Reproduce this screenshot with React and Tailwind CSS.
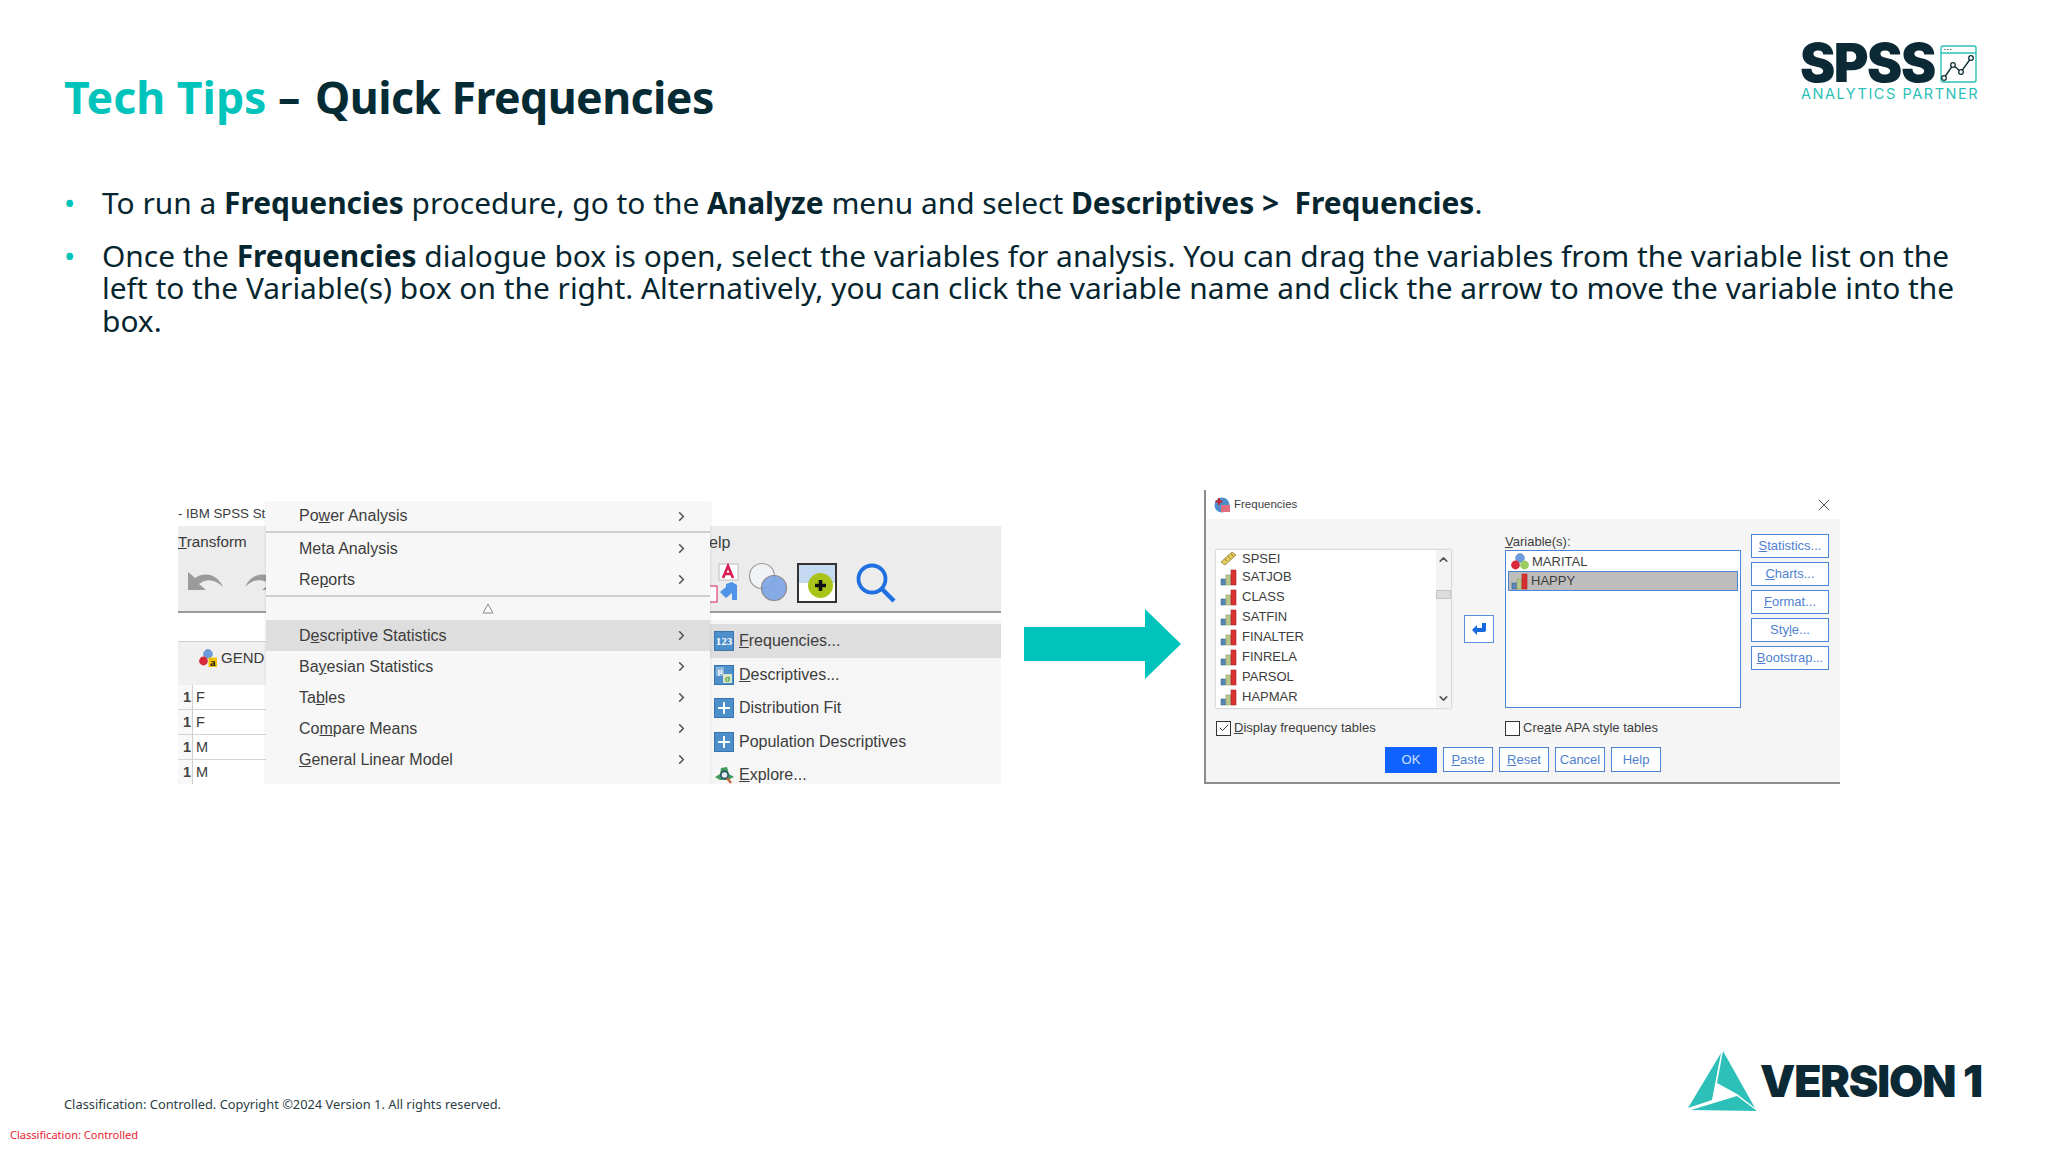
import React from 'react';
import { ChevronRight, ChevronUp, ChevronDown, X, Check } from 'lucide-react';

const MENU_TOP = [
  { label: <>Po<u>w</u>er Analysis</>, line: true, h: 'h-[30px]' },
  { label: 'Meta Analysis', h: 'h-[31px]' },
  { label: <>Re<u>p</u>orts</>, line: true, h: 'h-[31px]' }
];

const MENU_BOTTOM = [
  { label: <>D<u>e</u>scriptive Statistics</>, active: true },
  { label: <>Ba<u>y</u>esian Statistics</> },
  { label: <>Ta<u>b</u>les</> },
  { label: <>Co<u>m</u>pare Means</> },
  { label: <><u>G</u>eneral Linear Model</> },
  { label: 'Generalized Linear Models' }
];

const ROWS = [['1', 'F'], ['1', 'F'], ['1', 'M'], ['1', 'M']];
const VARIABLES = ['SATJOB', 'CLASS', 'SATFIN', 'FINALTER', 'FINRELA', 'PARSOL', 'HAPMAR'];

const SIDE_BUTTONS = [
  <><u>S</u>tatistics...</>,
  <><u>C</u>harts...</>,
  <><u>F</u>ormat...</>,
  <>Sty<u>l</u>e...</>,
  <><u>B</u>ootstrap...</>
];

const BOTTOM_BUTTONS = [
  { label: <><u>P</u>aste</>, w: 'w-[50px]' },
  { label: <><u>R</u>eset</>, w: 'w-[50px]' },
  { label: 'Cancel', w: 'w-[50px]' },
  { label: 'Help', w: 'w-[50px]' }
];

function ScaleIcon() {
  return (
    <svg width="17" height="17" viewBox="0 0 17 17" className="shrink-0">
      <rect x="1" y="10" width="4.5" height="6" fill="#5b86b8" stroke="#3f658f" strokeWidth="0.6" />
      <rect x="6" y="6" width="4.5" height="10" fill="#b9c98a" stroke="#8d9c60" strokeWidth="0.6" />
      <rect x="11" y="1" width="5" height="15" fill="#d8312f" stroke="#a82424" strokeWidth="0.6" />
    </svg>
  );
}

function RulerIcon() {
  return (
    <svg width="17" height="17" viewBox="0 0 17 17" className="shrink-0">
      <path d="M1 12 L12 2 L16 5 L5 15 Z" fill="#e3cb5e" stroke="#8d7a2c" strokeWidth="0.8" />
      <path d="M5 9l2 2M8 6.5l2 2M11 4l2 2" stroke="#6f6020" strokeWidth="0.8" />
    </svg>
  );
}

function NominalIcon({ letter }) {
  return (
    <svg width="20" height="20" viewBox="0 0 20 20" className="shrink-0">
      <circle cx="10" cy="6" r="4.4" fill="#6d9be0" stroke="#4b78bd" strokeWidth="0.6" />
      <circle cx="5.5" cy="13" r="4.4" fill="#d9283a" />
      {letter ? (
        <>
          <rect x="10.5" y="9.5" width="8.5" height="9.5" fill="#f2c200" />
          <text x="14.7" y="18" textAnchor="middle" fontSize="11" fontWeight="700" fontFamily="Liberation Serif, serif" fill="#1a1a1a">a</text>
        </>
      ) : (
        <circle cx="14.5" cy="13" r="4.4" fill="#9ccb62" />
      )}
    </svg>
  );
}

function MenuIcon({ kind }) {
  if (kind === 'explore') {
    return (
      <svg width="21" height="21" viewBox="0 0 21 21" className="shrink-0">
        <path d="M1 12 L6 9 L7 3 L13 2 L15 9 L20 12 L14 15 L6 15 Z" fill="#3f9a5c" />
        <circle cx="10.5" cy="10" r="3.6" fill="#e8eef2" stroke="#2c5068" strokeWidth="1.6" />
        <path d="M13 13 L17 18" stroke="#c2643c" strokeWidth="2.4" />
      </svg>
    );
  }
  return (
    <div className="w-[20px] h-[20px] shrink-0 bg-[#4d8fcb] border border-[#3a76ad] flex items-center justify-center text-white font-['Liberation_Serif',serif] text-[11px] font-bold leading-none">
      {kind === 'freq' && '123'}
      {kind === 'desc' && (
        <svg width="18" height="18" viewBox="0 0 18 18">
          <rect x="1" y="1" width="8" height="9" fill="#8db8dc" />
          <rect x="8" y="8" width="9" height="9" fill="#d7e6c6" />
          <text x="5" y="8" textAnchor="middle" fontSize="8" fill="#fff">µ</text>
          <text x="12.5" y="15.5" textAnchor="middle" fontSize="10" fill="#52a447">σ</text>
        </svg>
      )}
      {kind === 'plus' && (
        <svg width="14" height="14" viewBox="0 0 14 14">
          <path d="M7 1v12M1 7h12" stroke="#fff" strokeWidth="2" />
        </svg>
      )}
    </div>
  );
}

function SpssLogo() {
  return (
    <div className="flex flex-col w-[178px] mt-[44px] mr-[69px]">
      <div className="flex items-center h-[39px]">
        <span className="font-['Inter',sans-serif] font-black text-[53px] leading-none text-[#0b2a35] tracking-[-1.5px] w-[140px] -ml-[1px]">SPSS</span>
        <svg width="37" height="38" viewBox="0 0 37 38" className="shrink-0">
          <rect x="1" y="1" width="35" height="36" rx="2" fill="none" stroke="#2cc0b8" strokeWidth="1.4" />
          <path d="M1 8h35" stroke="#2cc0b8" strokeWidth="1.4" />
          <path d="M4 4.500h1.500M7 4.500h1.500M10 4.500h1.500" stroke="#5c6a70" strokeWidth="1.200" />
          <path d="M4 33 L13 20 L21 27 L31 13" fill="none" stroke="#13303a" strokeWidth="1.400" />
          <circle cx="4" cy="33" r="2.300" fill="#fff" stroke="#13303a" strokeWidth="1.300" />
          <circle cx="13" cy="20" r="2.300" fill="#fff" stroke="#13303a" strokeWidth="1.300" />
          <circle cx="21" cy="27" r="2.300" fill="#fff" stroke="#13303a" strokeWidth="1.300" />
          <circle cx="31" cy="13" r="2.300" fill="#fff" stroke="#13303a" strokeWidth="1.300" />
        </svg>
      </div>
      <span className="font-['Inter',sans-serif] text-[14.5px] leading-[16px] mt-[3px] text-[#2cc0b8] tracking-[1.55px] whitespace-nowrap">ANALYTICS PARTNER</span>
    </div>
  );
}

function VersionLogo() {
  return (
    <div className="flex items-center mr-[66px] mb-[41px]">
      <svg width="70" height="60" viewBox="0 0 70 60" className="shrink-0">
        <path d="M33 2 L0 57 L24 49 Z" fill="#2cc0b8" />
        <path d="M35 0 L67 57 L49 43 L29 32 Z" fill="#2cc0b8" />
        <path d="M3 59 L49 45 L69 60 Z" fill="#2cc0b8" />
      </svg>
      <span className="font-['Inter',sans-serif] font-black text-[44.5px] leading-none text-[#0b2a35] tracking-[-1.2px] ml-[2px] whitespace-nowrap">VERSION 1</span>
    </div>
  );
}

function LeftColumn() {
  return (
    <div className="w-[88px] shrink-0 flex flex-col font-['Liberation_Sans',sans-serif] text-[#3a3a3a] overflow-hidden">
      <div className="h-[25px] shrink-0 flex items-center text-[13.300px] whitespace-nowrap">- IBM SPSS St</div>
      <div className="h-[87px] shrink-0 bg-[#ececec] border-b-2 border-[#9a9a9a] flex flex-col">
        <span className="text-[15.200px] leading-[30px] mt-[1px] whitespace-nowrap"><u>T</u>ransform</span>
        <div className="flex gap-[16px] pl-[8px] mt-[11px]">
          <svg width="40" height="26" viewBox="0 0 40 26" className="shrink-0">
            <path d="M2 4 L2 22 L20 22 L13 16 C20 10 29 11 37 19 C32 7 19 3 9 10 Z" fill="#9b9b9b" />
          </svg>
          <svg width="40" height="26" viewBox="0 0 40 26" className="shrink-0">
            <path d="M38 4 L38 22 L20 22 L27 16 C20 10 11 11 3 19 C8 7 21 3 31 10 Z" fill="#9b9b9b" />
          </svg>
        </div>
      </div>
      <div className="h-[28px] shrink-0" />
      <div className="h-[44px] shrink-0 bg-[#f0f0f0] border-t border-[#cfcfcf] flex items-center pl-[20px] pb-[11px] gap-[3px] text-[15px]">
        <NominalIcon letter />
        <span>GEND</span>
      </div>
      {ROWS.map(([num, value], i) => (
        <div key={i} className="h-[25px] flex items-center border-b border-[#d4d4d4] text-[14.500px] shrink-0">
          <span className="w-[14px] text-right pr-[1px] font-bold text-[#444] bg-[#f8f8f8] h-full leading-[25px]">{num}</span>
          <span className="border-l border-[#cfcfcf] pl-[3px] h-full leading-[25px]">{value}</span>
        </div>
      ))}
    </div>
  );
}

function MainMenu() {
  return (
    <div className="w-[444px] shrink-0 bg-[#f7f7f7] font-['Liberation_Sans',sans-serif] text-[16px] text-[#3d3d3d] flex flex-col shadow-[0_0_3px_rgba(0,0,0,0.12)] z-10">
      {MENU_TOP.map((item, i) => (
        <React.Fragment key={i}>
          <div className={`${item.h} shrink-0 flex items-center justify-between pl-[33px] pr-[21px]`}>
            <span>{item.label}</span>
            <ChevronRight size={15} strokeWidth={2.600} className="text-[#555]" />
          </div>
          {item.line && <div className="h-[2px] bg-[#cfcfcf] shrink-0" />}
        </React.Fragment>
      ))}
      <div className="h-[23px] flex items-center justify-center shrink-0">
        <svg width="12" height="11" viewBox="0 0 12 11">
          <path d="M6 1 L11 10 H1 Z" fill="none" stroke="#8a8a8a" strokeWidth="1" />
        </svg>
      </div>
      {MENU_BOTTOM.map((item, i) => (
        <div
          key={i}
          className={
            item.active
              ? 'h-[31px] shrink-0 flex items-center justify-between pl-[33px] pr-[21px] bg-[#dedede]'
              : 'h-[31px] shrink-0 flex items-center justify-between pl-[33px] pr-[21px]'
          }
        >
          <span>{item.label}</span>
          <ChevronRight size={15} strokeWidth={2.600} className="text-[#555]" />
        </div>
      ))}
    </div>
  );
}

function RightColumn() {
  return (
    <div className="flex-1 flex flex-col font-['Liberation_Sans',sans-serif] text-[#3d3d3d] overflow-hidden">
      <div className="h-[25px] shrink-0" />
      <div className="h-[87px] bg-[#ececec] border-b-2 border-[#9a9a9a] flex flex-col shrink-0">
        <span className="text-[16px] leading-[30px] mt-[2px] -ml-[1px]">elp</span>
        <div className="flex items-center mt-[3px]">
          <svg width="30" height="42" viewBox="0 0 30 42" className="shrink-0">
            <rect x="9" y="2" width="19" height="16" fill="#fff" stroke="#bbb" />
            <path d="M13 16 L18 4 L23 16 M15 12h6" fill="none" stroke="#d81b52" strokeWidth="2.600" />
            <rect x="-2" y="24" width="9" height="16" fill="#fff" stroke="#d81b52" />
            <path d="M10 30 L16 25 V22 L22 20 L27 23 V38 H22 V31 L16 36 Z" fill="#4f94e8" />
          </svg>
          <svg width="44" height="44" viewBox="0 0 44 44" className="ml-[6px] shrink-0">
            <circle cx="16" cy="15" r="12.500" fill="#f0f2f6" stroke="#9a9a9a" strokeWidth="1.200" />
            <circle cx="28" cy="27" r="12.500" fill="#7ba3e4" fillOpacity="0.900" stroke="#8a8a8a" strokeWidth="1.200" />
          </svg>
          <div className="w-[40px] h-[40px] ml-[7px] border-2 border-[#333] bg-gradient-to-b from-[#c5d9f2] from-50% to-white to-50% flex items-end justify-end pr-[2px] pb-[3px] shrink-0">
            <div className="w-[25px] h-[25px] rounded-full bg-[#aac41a] flex items-center justify-center">
              <svg width="13" height="13" viewBox="0 0 13 13">
                <path d="M6.500 1v11M1 6.500h11" stroke="#111" strokeWidth="3.600" />
              </svg>
            </div>
          </div>
          <svg width="42" height="42" viewBox="0 0 42 42" className="ml-[18px] shrink-0">
            <circle cx="17" cy="17" r="13.500" fill="none" stroke="#1f6fe0" strokeWidth="3.800" />
            <path d="M27 27 L39 39" stroke="#1f6fe0" strokeWidth="4.400" />
          </svg>
        </div>
      </div>
      <div className="h-[7px] shrink-0" />
      <div className="flex-1 bg-[#f6f6f6] pt-[4px] text-[16px] flex flex-col">
        <div className="h-[34px] bg-[#dedede] flex items-center pl-[4px] gap-[5px] shrink-0">
          <MenuIcon kind="freq" />
          <span><u>F</u>requencies...</span>
        </div>
        <div className="h-[33px] flex items-center pl-[4px] gap-[5px] shrink-0">
          <MenuIcon kind="desc" />
          <span><u>D</u>escriptives...</span>
        </div>
        <div className="h-[34px] flex items-center pl-[4px] gap-[5px] shrink-0">
          <MenuIcon kind="plus" />
          <span>Distribution Fit</span>
        </div>
        <div className="h-[33px] flex items-center pl-[4px] gap-[5px] shrink-0">
          <MenuIcon kind="plus" />
          <span>Population Descriptives</span>
        </div>
        <div className="h-[34px] flex items-center pl-[4px] gap-[4px] shrink-0">
          <MenuIcon kind="explore" />
          <span><u>E</u>xplore...</span>
        </div>
      </div>
    </div>
  );
}

function FrequenciesDialog() {
  return (
    <div className="w-[636px] h-[294px] shrink-0 border-l-2 border-b-2 border-[#8c8c8c] flex flex-col font-['Liberation_Sans',sans-serif] text-[13px] text-[#3d3d3d]">
      <div className="h-[29px] shrink-0 flex items-center pl-[8px] pr-[6px] gap-[2px] bg-white">
        <svg width="16" height="16" viewBox="0 0 16 16" className="shrink-0">
          <circle cx="8" cy="8" r="7.500" fill="#4d8fcb" />
          <rect x="7" y="8" width="9" height="7" fill="#e0707e" />
          <path d="M5 1v7M1.500 4.500h7" stroke="#c8202e" strokeWidth="1.800" />
        </svg>
        <span className="text-[11.500px] ml-[2px] flex-1">Frequencies</span>
        <X size={20} strokeWidth={1} className="text-[#333]" />
      </div>
      <div className="flex-1 bg-[#f5f5f5] flex flex-col pl-[10px] pr-[9px]">
        <div className="flex mt-[15px]">
          <div className="w-[235px] h-[158px] mt-[16px] bg-white shadow-[0_0_2px_rgba(0,0,0,0.35)] flex shrink-0 overflow-hidden">
            <div className="flex-1 flex flex-col pl-[4px]">
              <div className="h-[17px] flex items-center gap-[5px] shrink-0">
                <RulerIcon />
                <span>SPSEI</span>
              </div>
              {VARIABLES.map((name) => (
                <div key={name} className="h-[20px] flex items-center gap-[5px] shrink-0">
                  <ScaleIcon />
                  <span>{name}</span>
                </div>
              ))}
            </div>
            <div className="w-[15px] bg-[#f3f3f3] flex flex-col items-center py-[3px]">
              <ChevronUp size={13} strokeWidth={3} className="text-[#555] shrink-0" />
              <div className="w-[15px] h-[9px] bg-[#dcdcdc] border border-[#c4c4c4] mt-[24px] shrink-0" />
              <div className="flex-1" />
              <ChevronDown size={13} strokeWidth={3} className="text-[#555] shrink-0" />
            </div>
          </div>
          <div className="w-[54px] shrink-0 flex justify-center items-start pt-[81px] pl-[2px]">
            <div className="w-[30px] h-[28px] border border-[#5a8fdc] bg-white flex items-center justify-center">
              <svg width="16" height="14" viewBox="0 0 16 14">
                <path d="M1 8 L6 3 V6 H11 V1 H15 V8 C15 10 13 10 11 10 H6 V13 Z" fill="#1668e0" />
              </svg>
            </div>
          </div>
          <div className="w-[236px] shrink-0 flex flex-col">
            <span className="h-[16px] leading-[16px]"><u>V</u>ariable(s):</span>
            <div className="h-[158px] border-[1.500px] border-[#4a86d8] bg-white p-[2px] flex flex-col">
              <div className="h-[18px] flex items-center gap-[2px] pl-[2px] shrink-0">
                <NominalIcon />
                <span>MARITAL</span>
              </div>
              <div className="h-[20px] bg-[#bdbdbd] border border-[#4a86d8] flex items-center gap-[3px] pl-[2px] shrink-0">
                <ScaleIcon />
                <span>HAPPY</span>
              </div>
            </div>
          </div>
          <div className="flex flex-col gap-[4px] ml-[10px] w-[78px] shrink-0">
            {SIDE_BUTTONS.map((label, i) => (
              <div key={i} className="h-[24px] border border-[#4a86d8] bg-white text-[#4f7fd0] flex items-center justify-center whitespace-nowrap">
                {label}
              </div>
            ))}
          </div>
        </div>
        <div className="flex mt-[12px] h-[16px] items-center">
          <div className="w-[289px] shrink-0 flex items-center gap-[3px]">
            <div className="w-[15px] h-[15px] border border-[#333] bg-white flex items-center justify-center">
              <Check size={12} strokeWidth={1.800} className="text-[#222]" />
            </div>
            <span><u>D</u>isplay frequency tables</span>
          </div>
          <div className="flex items-center gap-[3px]">
            <div className="w-[15px] h-[15px] border border-[#333] bg-white" />
            <span>Cre<u>a</u>te APA style tables</span>
          </div>
        </div>
        <div className="flex gap-[6px] mt-[11px] pl-[169px] text-[#4f7fd0]">
          <div className="w-[52px] h-[26px] bg-[#0f62fe] text-[#cfe0ff] flex items-center justify-center">OK</div>
          {BOTTOM_BUTTONS.map((button, i) => (
            <div key={i} className={`${button.w} h-[25px] border border-[#4a86d8] bg-white flex items-center justify-center`}>
              {button.label}
            </div>
          ))}
        </div>
      </div>
    </div>
  );
}

export default function App() {
  return (
    <div className="w-[2048px] h-[1152px] bg-white flex flex-col overflow-hidden font-['Noto_Sans',sans-serif] text-[#06262f]">
      <header className="flex justify-between items-start h-[187px] shrink-0">
        <h1 className="pl-[64px] pt-[65px] text-[44.600px] leading-[64px] font-bold text-[#052b35] whitespace-nowrap">
          <span className="text-[#00c4bc]">Tech Tips</span> – <span className="ml-[3px] tracking-[-0.55px]">Quick Frequencies</span>
        </h1>
        <SpssLogo />
      </header>

      <ul className="pl-[64px] pr-[68px] text-[29.900px] leading-[32.500px] flex flex-col gap-[20px] shrink-0">
        <li className="flex">
          <span className="w-[38px] shrink-0 text-[#00c4bc]">•</span>
          <span>To run a <b>Frequencies</b> procedure, go to the <b>Analyze</b> menu and select <b>Descriptives &gt;&nbsp; Frequencies</b>.</span>
        </li>
        <li className="flex">
          <span className="w-[38px] shrink-0 text-[#00c4bc]">•</span>
          <span>Once the <b>Frequencies</b> dialogue box is open, select the variables for analysis. You can drag the variables from the variable list on the left to the Variable(s) box on the right. Alternatively, you can click the variable name and click the arrow to move the variable into the box.</span>
        </li>
      </ul>

      <section className="flex items-center h-[294px] mt-[153px] pl-[178px] shrink-0">
        <div className="w-[823px] h-[283px] mt-[11px] flex shrink-0 overflow-hidden">
          <LeftColumn />
          <MainMenu />
          <RightColumn />
        </div>
        <svg width="158" height="70" viewBox="0 0 158 70" className="ml-[23px] mr-[22px] mt-[13px] shrink-0">
          <path d="M0 18 H121 V0 L157 35 L121 70 V52 H0 Z" fill="#00c4bc" />
        </svg>
        <FrequenciesDialog />
      </section>

      <footer className="flex-1 flex justify-between items-end">
        <div className="flex flex-col pl-[10px] pb-[9px]">
          <span className="pl-[54px] text-[12.850px] leading-[18px] text-[#2c3e45] whitespace-nowrap">Classification: Controlled. Copyright ©2024 Version 1. All rights reserved.</span>
          <span className="mt-[14px] text-[11.050px] leading-[16px] text-[#e8222e] whitespace-nowrap">Classification: Controlled</span>
        </div>
        <VersionLogo />
      </footer>
    </div>
  );
}
